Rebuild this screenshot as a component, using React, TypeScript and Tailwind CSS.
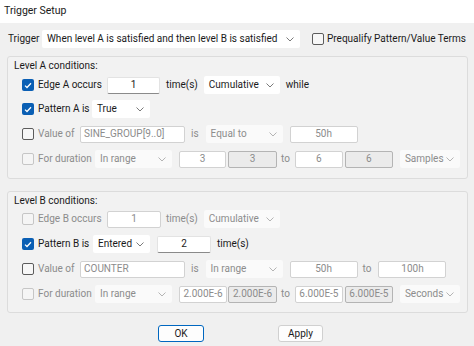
import { ReactNode } from 'react'

const font = { fontFamily: 'Roboto, "Liberation Sans", sans-serif' }

function Chevron({ dim }: { dim?: boolean }) {
  return (
    <svg width="8" height="5" viewBox="0 0 8 5" className="shrink-0">
      <path d="M0.5 0.5 L4 4 L7.5 0.5" fill="none" stroke={dim ? '#b4b4b4' : '#7a7a7a'} strokeWidth="1" />
    </svg>
  )
}

function Check({ state }: { state: 'on' | 'off' | 'disabled' }) {
  if (state === 'on') {
    return (
      <span className="flex h-[12px] w-[12px] shrink-0 items-center justify-center rounded-[2px] bg-[#0a5fb4]">
        <svg width="8" height="7" viewBox="0 0 8 7">
          <path d="M1 3.6 L3 5.5 L7 1.2" fill="none" stroke="#fff" strokeWidth="1.3" />
        </svg>
      </span>
    )
  }
  return (
    <span
      className={
        state === 'off'
          ? 'block h-[12px] w-[12px] shrink-0 rounded-[2px] border border-[#5c5c5c] bg-[#f7f7f7]'
          : 'block h-[12px] w-[12px] shrink-0 rounded-[2px] border border-[#c6c6c6] bg-[#f5f5f5]'
      }
    />
  )
}

function Select({ w, text, dim, ml }: { w: string; text: string; dim?: boolean; ml: string }) {
  return (
    <div
      className={`${w} ${ml} flex h-[18px] shrink-0 items-center justify-between rounded-[2px] pl-[5px] pr-[6px] ${
        dim ? 'bg-[#fafafa] text-[#8c8c8c]' : 'bg-white text-[#1a1a1a]'
      }`}
    >
      <span className="whitespace-nowrap">{text}</span>
      <Chevron dim={dim} />
    </div>
  )
}

type BoxKind = 'edit' | 'dim' | 'ro'

function Box({ w, text, kind, ml, left }: { w: string; text: string; kind: BoxKind; ml: string; left?: boolean }) {
  const look =
    kind === 'edit'
      ? 'bg-white border border-[#e3e3e3] border-b-[#8a8a8a] text-[#1a1a1a]'
      : kind === 'dim'
        ? 'bg-white border border-[#d2d2d2] text-[#8c8c8c]'
        : 'bg-[#ebebeb] border border-[#b4b4b4] text-[#8c8c8c]'
  return (
    <div
      className={`${w} ${ml} ${look} flex h-[17px] shrink-0 items-center overflow-hidden whitespace-nowrap rounded-[2px] ${
        left ? 'justify-start pl-[3px]' : 'justify-center'
      }`}
    >
      {text}
    </div>
  )
}

function Row({ children, mt }: { children: ReactNode; mt: string }) {
  return <div className={`${mt} flex h-[18px] items-center whitespace-nowrap pl-[14px]`}>{children}</div>
}

function Label({ w, text, dim }: { w: string; text: string; dim?: boolean }) {
  return <span className={`${w} shrink-0 pl-[4px] ${dim ? 'text-[#8c8c8c]' : 'text-[#1a1a1a]'}`}>{text}</span>
}

function Word({ text, ml, dim }: { text: string; ml: string; dim?: boolean }) {
  return <span className={`${ml} shrink-0 ${dim ? 'text-[#8c8c8c]' : 'text-[#1a1a1a]'}`}>{text}</span>
}

function Group({ title, children, mt, h }: { title: string; children: ReactNode; mt: string; h: string }) {
  return (
    <div className={`${mt} ${h} w-[461px] rounded-[3px] border border-[#dcdcdc] bg-[#f2f2f2]`}>
      <div className="pl-[6px] pt-[2px] leading-[14px] text-[#1a1a1a]">{title}</div>
      {children}
    </div>
  )
}

export default function App() {
  return (
    <div style={font} className="h-[346px] w-[474px] overflow-hidden bg-[#f0f0f0] text-[10px] leading-none">
      <div className="flex h-[23px] items-center bg-white pl-[4px] text-[10.5px] text-[#1a1a1a]">Trigger Setup</div>

      <div className="pl-[7px]">
        <div className="mt-[7px] flex h-[18px] items-center whitespace-nowrap">
          <span className="w-[35px] pl-[1px] text-[#1a1a1a]">Trigger</span>
          <Select w="w-[258px]" ml="ml-0" text="When level A is satisfied and then level B is satisfied" />
          <span className="ml-[12px] flex">
            <Check state="off" />
          </span>
          <span className="ml-[3px] text-[#1a1a1a]">Prequalify Pattern/Value Terms</span>
        </div>

        <Group title="Level A conditions:" mt="mt-[8px]" h="h-[123px]">
          <Row mt="mt-[3px]">
            <Check state="on" />
            <Label w="w-[73px]" text="Edge A occurs" />
            <Box w="w-[53px]" ml="ml-0" kind="edit" text="1" />
            <Word ml="ml-[6px]" text="time(s)" />
            <Select w="w-[76px]" ml="ml-[6px]" text="Cumulative" />
            <Word ml="ml-[6px]" text="while" />
          </Row>
          <Row mt="mt-[6px]">
            <Check state="on" />
            <Label w="w-[58px]" text="Pattern A is" />
            <Select w="w-[58px]" ml="ml-0" text="True" />
          </Row>
          <Row mt="mt-[7px]">
            <Check state="off" />
            <Label w="w-[46px]" text="Value of" dim />
            <Box w="w-[105px]" ml="ml-0" kind="dim" text="SINE_GROUP[9..0]" left />
            <Word ml="ml-[6px]" text="is" dim />
            <Select w="w-[77px]" ml="ml-[7px]" text="Equal to" dim />
            <Box w="w-[68px]" ml="ml-[7px]" kind="dim" text="50h" />
          </Row>
          <Row mt="mt-[7px]">
            <Check state="disabled" />
            <Label w="w-[61px]" text="For duration" dim />
            <Select w="w-[77px]" ml="ml-0" text="In range" dim />
            <Box w="w-[47px]" ml="ml-[7px]" kind="dim" text="3" />
            <Box w="w-[49px]" ml="ml-[2px]" kind="ro" text="3" />
            <Word ml="ml-[4px]" text="to" dim />
            <Box w="w-[48px]" ml="ml-[5px]" kind="dim" text="6" />
            <Box w="w-[48px]" ml="ml-[2px]" kind="ro" text="6" />
            <Select w="w-[60px]" ml="ml-[7px]" text="Samples" dim />
          </Row>
        </Group>

        <Group title="Level B conditions:" mt="mt-[12px]" h="h-[122px]">
          <Row mt="mt-[2px]">
            <Check state="disabled" />
            <Label w="w-[73px]" text="Edge B occurs" dim />
            <Box w="w-[54px]" ml="ml-0" kind="dim" text="1" />
            <Word ml="ml-[5px]" text="time(s)" dim />
            <Select w="w-[76px]" ml="ml-[6px]" text="Cumulative" dim />
          </Row>
          <Row mt="mt-[7px]">
            <Check state="on" />
            <Label w="w-[59px]" text="Pattern B is" />
            <Select w="w-[57px]" ml="ml-0" text="Entered" />
            <Box w="w-[54px]" ml="ml-[7px]" kind="edit" text="2" />
            <Word ml="ml-[6px]" text="time(s)" />
          </Row>
          <Row mt="mt-[7px]">
            <Check state="off" />
            <Label w="w-[46px]" text="Value of" dim />
            <Box w="w-[105px]" ml="ml-0" kind="dim" text="COUNTER" left />
            <Word ml="ml-[6px]" text="is" dim />
            <Select w="w-[77px]" ml="ml-[7px]" text="In range" dim />
            <Box w="w-[68px]" ml="ml-[7px]" kind="dim" text="50h" />
            <Word ml="ml-[5px]" text="to" dim />
            <Box w="w-[68px]" ml="ml-[7px]" kind="dim" text="100h" />
          </Row>
          <Row mt="mt-[7px]">
            <Check state="disabled" />
            <Label w="w-[61px]" text="For duration" dim />
            <Select w="w-[77px]" ml="ml-0" text="In range" dim />
            <Box w="w-[48px]" ml="ml-[7px]" kind="dim" text="2.000E-6" />
            <Box w="w-[49px]" ml="ml-[1px]" kind="ro" text="2.000E-6" />
            <Word ml="ml-[4px]" text="to" dim />
            <Box w="w-[48px]" ml="ml-[5px]" kind="dim" text="6.000E-5" />
            <Box w="w-[48px]" ml="ml-[2px]" kind="ro" text="6.000E-5" />
            <Select w="w-[60px]" ml="ml-[7px]" text="Seconds" dim />
          </Row>
        </Group>

        <div className="mt-[12px] flex">
          <button className="ml-[151px] flex h-[17px] w-[46px] items-center justify-center rounded-[3px] border border-[#0067c0] bg-[#fdfdfd] text-[#1a1a1a]">
            OK
          </button>
          <button className="ml-[74px] flex h-[17px] w-[45px] items-center justify-center rounded-[3px] border border-[#d0d0d0] bg-[#fdfdfd] text-[#1a1a1a]">
            Apply
          </button>
        </div>
      </div>
    </div>
  )
}
